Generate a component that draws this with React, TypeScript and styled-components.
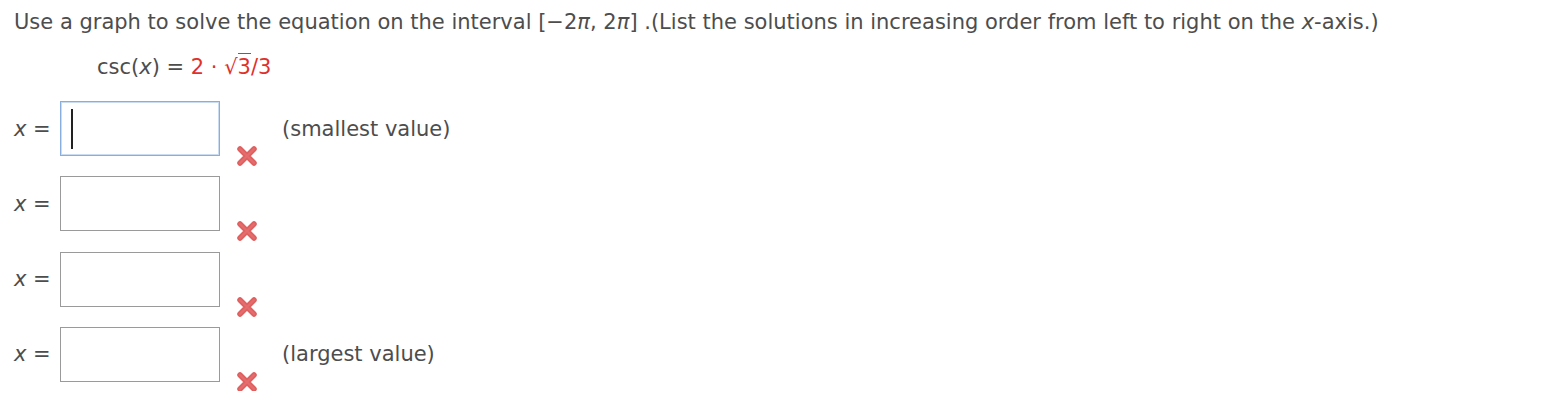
import styled, { createGlobalStyle } from "styled-components"

const GlobalStyle = createGlobalStyle`
    body {
        margin: 0;
        background: #fff;
        font-family: "DejaVu Sans", Verdana, sans-serif;
        color: #4d4d4d;
    }
`

const Page = styled.div`
    padding: 9px 14px;
    font-size: 21px;
`

const Prompt = styled.p`
    margin: 0;
    line-height: 26px;
    white-space: nowrap;
`

const Equation = styled.div`
    margin: 19px 0 0 83px;
    line-height: 26px;
`

const Red = styled.span`
    color: #e0302c;
`

const Radicand = styled.span`
    border-top: 1.5px solid #e0302c;
    padding-top: 1px;
`

const Answers = styled.div`
    display: flex;
    flex-direction: column;
    gap: 20.3px;
    margin-top: 21px;
`

const Row = styled.div`
    display: flex;
    align-items: center;
    height: 55px;
`

const Label = styled.span`
    width: 46px;
    flex-shrink: 0;
    white-space: nowrap;
`

const Field = styled.div`
    position: relative;
`

const Input = styled.input<{ focused?: boolean }>`
    display: block;
    box-sizing: border-box;
    width: 160px;
    height: 55px;
    margin: 0;
    border: 1px solid ${props => props.focused ? "#88aedd" : "#9a9a9a"};
    box-shadow: ${props => props.focused ? "inset 0 0 0 1px #c9dcf2" : "none"};
    outline: none;
    font-size: 21px;
    font-family: inherit;
    background: #fff;
`

const Caret = styled.span`
    position: absolute;
    left: 11px;
    top: 8px;
    width: 1.5px;
    height: 40px;
    background: #222;
`

const Mark = styled.span`
    align-self: flex-end;
    margin: 0 0 -11px 16px;
    width: 22px;
    height: 22px;
    display: flex;
`

const Note = styled.span`
    margin-left: 24px;
`

function Cross() {
    return (
        <svg width="22" height="22" viewBox="0 0 22 22">
            <path d="M4 4 L18 18 M18 4 L4 18" stroke="#e06060" strokeWidth="5.5" strokeLinecap="round" />
            <path d="M4 4 L18 18 M18 4 L4 18" stroke="#e87a7a" strokeWidth="2" strokeLinecap="round" opacity="0.5" />
        </svg>
    )
}

const rows = [
    { note: "(smallest value)", focused: true },
    { note: "", focused: false },
    { note: "", focused: false },
    { note: "(largest value)", focused: false },
]

export default function App() {
    return (
        <Page>
            <GlobalStyle />
            <Prompt>
                Use a graph to solve the equation on the interval [−2<i>π</i>, 2<i>π</i>] .(List the solutions in increasing order from left to right on the <i>x</i>-axis.)
            </Prompt>
            <Equation>
                csc(<i>x</i>) = <Red>2 · √<Radicand>3</Radicand>/3</Red>
            </Equation>
            <Answers>
                {rows.map((r, i) => (
                    <Row key={i}>
                        <Label><i>x</i> =</Label>
                        <Field>
                            <Input focused={r.focused} type="text" />
                            {r.focused && <Caret />}
                        </Field>
                        <Mark><Cross /></Mark>
                        {r.note && <Note>{r.note}</Note>}
                    </Row>
                ))}
            </Answers>
        </Page>
    )
}
